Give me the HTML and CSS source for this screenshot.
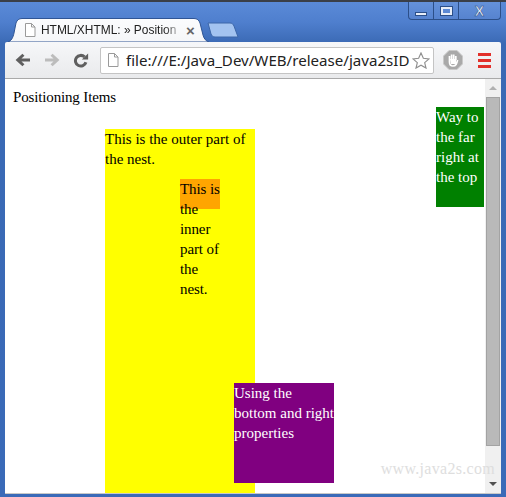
FILE: index.html
```html
<!DOCTYPE html>
<html lang="en">
<head>
    <meta charset="UTF-8">
    <title>HTML/XHTML: » Positioning Items</title>
    <link rel="stylesheet" href="styles.css">
</head>
<body>
    <div class="window">
        <!-- Title bar: tabs and window buttons -->
        <div class="titlebar">
            <div class="tab">
                <svg class="tab-shape" width="201" height="24" viewBox="0 0 201 24">
                    <defs>
                        <linearGradient id="tabFill" x1="0" y1="0" x2="0" y2="1">
                            <stop offset="0" stop-color="#fbfcfe"/>
                            <stop offset="1" stop-color="#f5f6f8"/>
                        </linearGradient>
                    </defs>
                    <path d="M0 24 C3 23 5 20 6 15 L8 5 C9 2 11 .5 14 .5 L186 .5 C189 .5 191 2 192 5 L195 17 C196 21 198 23 201 24 Z" fill="url(#tabFill)" stroke="#2f5595"/>
                </svg>
                <svg class="page-icon" width="12" height="14" viewBox="0 0 12 14">
                    <path d="M1.5 .5 H7.5 L11 4 V13.5 H1.5 Z M7.5 .5 V4 H11" fill="#fff" stroke="#9a9a9a"/>
                </svg>
                <span class="tab-title">HTML/XHTML: » Position</span>
                <span class="tab-close">×</span>
            </div>
            <svg class="new-tab" width="32" height="16" viewBox="0 0 32 16">
                <path d="M1 1 H23 C25 1 26 2 27 4 L31 15 H8 C6 15 5 14 4 12 Z" fill="#a3c3f0" stroke="#3c66a8"/>
            </svg>
            <div class="controls">
                <div class="ctl ctl-min"><span class="min-glyph"></span></div>
                <div class="ctl ctl-max"><span class="max-glyph"></span></div>
                <div class="ctl ctl-close">X</div>
            </div>
        </div>

        <!-- Toolbar -->
        <div class="toolbar">
            <svg class="nav-icon" width="16" height="14" viewBox="0 0 18 16">
                <path d="M17 8 H4 M9.5 2 L3 8 L9.5 14" fill="none" stroke="#5f5f5f" stroke-width="3.4"/>
            </svg>
            <svg class="nav-icon" width="16" height="14" viewBox="0 0 18 16">
                <path d="M1 8 H14 M8.5 2 L15 8 L8.5 14" fill="none" stroke="#bcbcbc" stroke-width="3.4"/>
            </svg>
            <svg class="nav-icon" width="16" height="15" viewBox="0 0 18 16">
                <path d="M14.5 10 A6 6 0 1 1 13 4" fill="none" stroke="#5f5f5f" stroke-width="3.4"/>
                <path d="M10 7 H17 V0 Z" fill="#5f5f5f"/>
            </svg>
            <div class="omnibox">
                <svg class="url-icon" width="12" height="14" viewBox="0 0 12 14">
                    <path d="M1.5 .5 H7.5 L11 4 V13.5 H1.5 Z M7.5 .5 V4 H11" fill="#fff" stroke="#9a9a9a"/>
                </svg>
                <span class="url">file:///E:/Java_Dev/WEB/release/java2sID</span>
                <svg class="star" width="18" height="17" viewBox="0 0 19 18">
                    <path d="M9.5 1 L12 6.7 L18 7.3 L13.4 11.3 L14.8 17 L9.5 14 L4.2 17 L5.6 11.3 L1 7.3 L7 6.7 Z" fill="#fff" stroke="#8f8f8f" stroke-width="1.2"/>
                </svg>
            </div>
            <svg class="adblock" width="20" height="20" viewBox="0 0 20 20">
                <path d="M6 .5 H14 L19.5 6 V14 L14 19.5 H6 L.5 14 V6 Z" fill="#a9a9a9" stroke="#c9c9c9"/>
                <path d="M6.5 10 V6 M8.6 10 V4.5 M10.7 10 V4.5 M12.8 10 V6 M6.5 10 V12 C6.5 15 8 16 10 16 C13 16 13.6 14 14.6 10" fill="none" stroke="#fff" stroke-width="1.7"/>
                <path d="M7 9 H13 V14 H8 Z" fill="#fff"/>
            </svg>
            <div class="menu-btn"><span></span><span></span><span></span></div>
        </div>

        <!-- Page area -->
        <div class="viewport">
            <div class="page">
                <p class="heading">Positioning Items</p>
                <div class="outer">
                    This is the outer part of the nest.
                    <div class="inner">This is the inner part of the nest.</div>
                    <div class="bottom-right">Using the bottom and right properties</div>
                </div>
                <div class="far-right">Way to the far right at the top</div>
            </div>
            <div class="scrollbar">
                <span class="arrow-up"></span>
                <div class="track"><div class="thumb"></div></div>
                <span class="arrow-down"></span>
            </div>
            <div class="watermark">www.java2s.com</div>
        </div>
    </div>
</body>
</html>
```

FILE: styles.css
```css
/* Reset and Base Styles */
* {
    margin: 0;
    padding: 0;
    box-sizing: border-box;
}

body {
    width: 506px;
    height: 497px;
    overflow: hidden;
    background-color: #3d6db8;
}

/* Window frame */
.window {
    width: 506px;
    height: 497px;
    display: flex;
    flex-direction: column;
    padding: 0 5px 3px 5px;
    background: linear-gradient(to bottom, #5a8ad8 0, #4f7fce 20px, #3a69b4 42px, #3a6ab8 100%);
    border-top: 2px solid #3a3f48;
}

/* Title bar */
.titlebar {
    height: 40px;
    flex: none;
    position: relative;
    display: flex;
    align-items: flex-end;
}

.tab {
    position: relative;
    width: 201px;
    height: 24px;
    margin-left: 3px;
    display: flex;
    align-items: center;
    font-family: "Liberation Sans", Arial, sans-serif;
    font-size: 11.95px;
    color: #222;
}

.tab-shape {
    position: absolute;
    left: 0;
    top: 0;
}

.page-icon {
    position: relative;
    margin-left: 16px;
}

.tab-title {
    position: relative;
    margin-left: 5px;
    width: 137px;
    white-space: nowrap;
    -webkit-mask-image: linear-gradient(to right, #000 90%, rgba(0, 0, 0, 0.3));
}

.tab-close {
    position: relative;
    margin-left: 8px;
    font-size: 15px;
    font-weight: 700;
    color: #666;
}

.new-tab {
    margin-left: -2px;
    margin-bottom: 4px;
}

.controls {
    position: absolute;
    top: 0;
    right: 0;
    width: 93px;
    height: 18px;
    display: flex;
    border: 1px solid #2c4f88;
    border-top: none;
    border-radius: 0 0 4px 4px;
    background: linear-gradient(to bottom, #6592da, #5683cf);
}

.ctl {
    display: flex;
    align-items: center;
    justify-content: center;
    border-right: 1px solid #2c4f88;
}

.ctl-min { width: 25px; }
.ctl-max { width: 25px; }

.ctl-close {
    flex: 1;
    border-right: none;
    font-family: "Liberation Sans", Arial, sans-serif;
    font-size: 14px;
    font-weight: 700;
    color: #e8eef8;
    -webkit-text-stroke: 0.5px #2c4f88;
}

.min-glyph {
    width: 12px;
    height: 4px;
    margin-top: 6px;
    background-color: #e8eef8;
    border: 1px solid #2c4f88;
}

.max-glyph {
    width: 11px;
    height: 8px;
    border: 2px solid #e8eef8;
    outline: 1px solid #2c4f88;
}

/* Toolbar */
.toolbar {
    height: 37px;
    flex: none;
    display: flex;
    align-items: center;
    padding-left: 10px;
    gap: 13px;
    background: linear-gradient(to bottom, #f6f7f9, #e9eaec);
    border-bottom: 1px solid #a9a9a9;
    border-radius: 2px 2px 0 0;
}

.omnibox {
    width: 334px;
    height: 27px;
    margin-left: -2px;
    display: flex;
    align-items: center;
    padding-left: 6px;
    background-color: #fff;
    border: 1px solid #c4c4c4;
    border-radius: 2px;
}

.url {
    margin-left: 7px;
    width: 282px;
    white-space: nowrap;
    font-family: "Noto Sans", "Liberation Sans", sans-serif;
    font-size: 15.1px;
    color: #222;
}

.star {
    margin-left: 4px;
}

.adblock {
    margin-left: -4px;
}

.menu-btn {
    margin-left: 2px;
    width: 13px;
    display: flex;
    flex-direction: column;
    gap: 3px;
}

.menu-btn span {
    height: 3px;
    background-color: #e2302a;
}

/* Page area */
.viewport {
    position: relative;
    flex: 1;
    min-height: 0;
    display: flex;
    border-bottom: 1px solid #c8c8c8;
}

.page {
    position: relative;
    flex: 1;
    overflow: hidden;
    background-color: #fff;
    font-family: "Liberation Serif", "Times New Roman", serif;
    font-size: 15px;
    line-height: 20px;
    color: #000;
}

.heading {
    position: absolute;
    left: 8px;
    top: 8px;
    letter-spacing: -0.15px;
}

/* Positioned boxes: their place on the canvas is what the page shows */
.outer {
    position: absolute;
    left: 100px;
    top: 50px;
    width: 150px;
    height: 400px;
    background-color: yellow;
}

.inner {
    position: absolute;
    left: 75px;
    top: 50px;
    width: 40px;
    height: 30px;
    letter-spacing: -0.1px;
    background-color: orange;
}

.bottom-right {
    position: absolute;
    left: 129px;
    top: 254px;
    width: 100px;
    height: 100px;
    background-color: purple;
    color: #fff;
}

.far-right {
    position: absolute;
    left: 431px;
    top: 28px;
    width: 48px;
    height: 100px;
    background-color: green;
    color: #fff;
}

.watermark {
    position: absolute;
    right: 6px;
    top: 381px;
    font-family: "Liberation Serif", "Times New Roman", serif;
    font-size: 16px;
    letter-spacing: 0.3px;
    color: #dedede;
}

/* Scrollbar */
.scrollbar {
    width: 16px;
    flex: none;
    display: flex;
    flex-direction: column;
    align-items: center;
    background-color: #f0f0f0;
}

.track {
    flex: 1;
    width: 100%;
    padding-top: 1px;
}

.thumb {
    width: 14px;
    height: 349px;
    margin: 0 auto;
    background-color: #b9b9b9;
    border: 1px solid #a3a3a3;
}

.arrow-up {
    flex: none;
    margin: 7px 0 6px;
    border-left: 4px solid transparent;
    border-right: 4px solid transparent;
    border-bottom: 4px solid #b0b0b0;
}

.arrow-down {
    flex: none;
    margin: 0 0 7px;
    border-left: 4px solid transparent;
    border-right: 4px solid transparent;
    border-top: 4px solid #505050;
}
```
